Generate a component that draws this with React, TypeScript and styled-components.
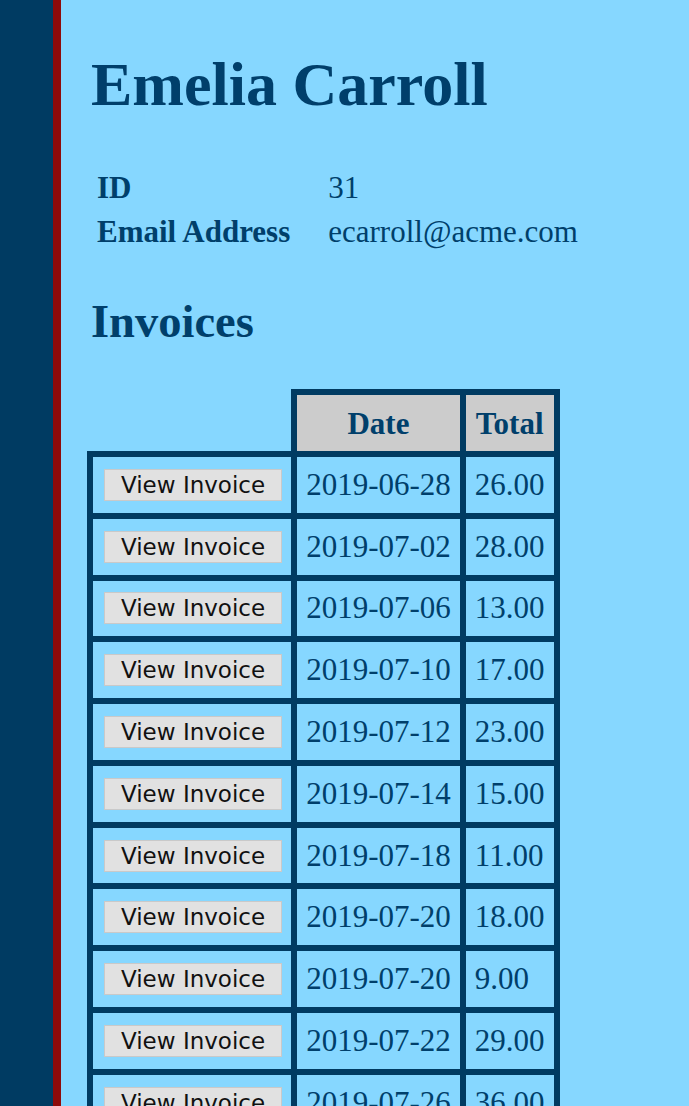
import styled, { createGlobalStyle } from 'styled-components';

const GlobalStyle = createGlobalStyle`
  html, body {
    margin: 0;
    padding: 0;
    background: #86d7ff;
  }
  body {
    font-family: "Liberation Serif", "Times New Roman", serif;
    color: #003f6b;
  }
`;

interface Invoice {
  date: string;
  total: string;
}

const invoices: Invoice[] = [
  { date: '2019-06-28', total: '26.00' },
  { date: '2019-07-02', total: '28.00' },
  { date: '2019-07-06', total: '13.00' },
  { date: '2019-07-10', total: '17.00' },
  { date: '2019-07-12', total: '23.00' },
  { date: '2019-07-14', total: '15.00' },
  { date: '2019-07-18', total: '11.00' },
  { date: '2019-07-20', total: '18.00' },
  { date: '2019-07-20', total: '9.00' },
  { date: '2019-07-22', total: '29.00' },
  { date: '2019-07-26', total: '36.00' },
];

export default function App() {
  return (
    <>
      <GlobalStyle />
      <Layout>
        <Sidebar />
        <Main>
          <Title>Emelia Carroll</Title>
          <InfoTable>
            <tbody>
              <tr>
                <InfoLabel>ID</InfoLabel>
                <InfoValue>31</InfoValue>
              </tr>
              <tr>
                <InfoLabel>Email Address</InfoLabel>
                <InfoValue>ecarroll@acme.com</InfoValue>
              </tr>
            </tbody>
          </InfoTable>
          <SubTitle>Invoices</SubTitle>
          <InvoiceTable>
            <thead>
              <tr>
                <BlankHead />
                <HeadCell>Date</HeadCell>
                <HeadCell>Total</HeadCell>
              </tr>
            </thead>
            <tbody>
              {invoices.map((inv, i) => (
                <tr key={i}>
                  <ButtonCell>
                    <ViewButton type="button">View Invoice</ViewButton>
                  </ButtonCell>
                  <Cell>{inv.date}</Cell>
                  <Cell>{inv.total}</Cell>
                </tr>
              ))}
            </tbody>
          </InvoiceTable>
        </Main>
      </Layout>
    </>
  );
}

// ------------ styles ------------
const Layout = styled.div`
  display: flex;
  min-height: 100vh;
`;

const Sidebar = styled.aside`
  flex: 0 0 53px;
  background: #003b62;
  border-right: 8px solid #8e0a0a;
`;

const Main = styled.main`
  flex: 1;
  padding: 0 30px;
  overflow: hidden;
`;

const Title = styled.h1`
  font-size: 62px;
  font-weight: bold;
  margin: 49px 0 44px;
`;

const InfoTable = styled.table`
  border-spacing: 4px;
  font-size: 31px;
`;

const InfoLabel = styled.th`
  text-align: left;
  padding: 2px 32px 2px 2px;
`;

const InfoValue = styled.td`
  padding: 2px;
`;

const SubTitle = styled.h2`
  font-size: 46.5px;
  font-weight: bold;
  margin: 39px 0 41px;
`;

const InvoiceTable = styled.table`
  border-collapse: collapse;
  font-size: 31px;
  margin-left: -4px;
`;

const BlankHead = styled.th`
  border: none;
`;

const HeadCell = styled.th`
  border: 6px solid #003b62;
  background: #cccccc;
  padding: 11px 9px 9px;
  font-weight: bold;
`;

const Cell = styled.td`
  border: 6px solid #003b62;
  padding: 9.9px 9px;
  white-space: nowrap;
`;

const ButtonCell = styled(Cell)`
  padding-left: 11px;
  padding-right: 9px;
`;

const ViewButton = styled.button`
  font-family: "DejaVu Sans", Verdana, sans-serif;
  font-size: 23px;
  color: #111;
  background: #e1e1e1;
  border: 1px solid #c9c9c9;
  padding: 2px 16px;
  margin: 0;
  display: block;
`;
